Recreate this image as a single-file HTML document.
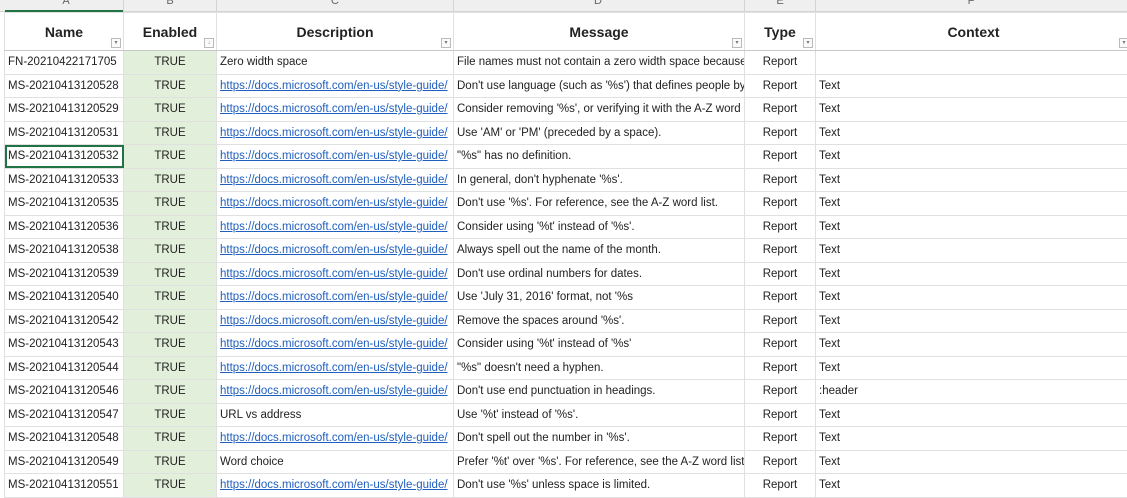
<!DOCTYPE html><html><head><style>
body{margin:0;width:1127px;height:497px;overflow:hidden;background:#fff;font-family:"Liberation Sans",Calibri,sans-serif;position:relative}
.hdr{position:absolute;top:0;left:0;width:1127px;height:11px;background:#efefef;border-bottom:1px solid #d4d4d4}
.hdr span{position:absolute;top:-5px;font-size:11px;color:#666;transform:translateX(-50%)}
.vl{position:absolute;top:0;width:1px;height:11px;background:#d4d4d4}
table{position:absolute;top:12px;left:4px;border-collapse:collapse;table-layout:fixed;width:1127px}
td{border:1px solid #e0e0e0;height:22.5px;padding:0 3px;font-size:11.5px;white-space:nowrap;overflow:hidden;color:#222}
tr.h td{height:37px;font-weight:bold;font-size:14px;text-align:center;position:relative;border-bottom:1px solid #c8c8c8}
.b{background:#e2efda;text-align:center}
.c{text-align:center}
a{color:#1f5fbf;text-decoration:underline}
.dd{position:absolute;right:2px;bottom:2px;width:8px;height:8px;border:1px solid #bbb;background:#fafafa;font-size:6px;line-height:8px;color:#777;font-weight:normal}
</style></head><body>
<div class="hdr">
<span style="left:66px">A</span><span style="left:170px">B</span><span style="left:335px">C</span><span style="left:598px">D</span><span style="left:780px">E</span><span style="left:971px">F</span>
<div class="vl" style="left:123px"></div><div class="vl" style="left:216px"></div><div class="vl" style="left:453px"></div><div class="vl" style="left:744px"></div><div class="vl" style="left:815px"></div>
<div style="position:absolute;left:5px;top:10px;width:118px;height:2px;background:#217346"></div>
</div>
<table>
<colgroup><col style="width:119px"><col style="width:93px"><col style="width:237px"><col style="width:291px"><col style="width:71px"><col style="width:316px"></colgroup>
<tr class="h"><td>Name<span class="dd">▾</span></td><td>Enabled<span class="dd">↓</span></td><td>Description<span class="dd">▾</span></td><td>Message<span class="dd">▾</span></td><td>Type<span class="dd">▾</span></td><td>Context<span class="dd">▾</span></td></tr>
<tr><td>FN-20210422171705</td><td class="b">TRUE</td><td>Zero width space</td><td>File names must not contain a zero width space because it</td><td class="c">Report</td><td></td></tr>
<tr><td>MS-20210413120528</td><td class="b">TRUE</td><td><a>https://docs.microsoft.com/en-us/style-guide/</a></td><td>Don't use language (such as '%s') that defines people by t</td><td class="c">Report</td><td>Text</td></tr>
<tr><td>MS-20210413120529</td><td class="b">TRUE</td><td><a>https://docs.microsoft.com/en-us/style-guide/</a></td><td>Consider removing '%s', or verifying it with the A-Z word</td><td class="c">Report</td><td>Text</td></tr>
<tr><td>MS-20210413120531</td><td class="b">TRUE</td><td><a>https://docs.microsoft.com/en-us/style-guide/</a></td><td>Use 'AM' or 'PM' (preceded by a space).</td><td class="c">Report</td><td>Text</td></tr>
<tr><td style="outline:2px solid #217346;outline-offset:-2px">MS-20210413120532</td><td class="b">TRUE</td><td><a>https://docs.microsoft.com/en-us/style-guide/</a></td><td>"%s" has no definition.</td><td class="c">Report</td><td>Text</td></tr>
<tr><td>MS-20210413120533</td><td class="b">TRUE</td><td><a>https://docs.microsoft.com/en-us/style-guide/</a></td><td>In general, don't hyphenate '%s'.</td><td class="c">Report</td><td>Text</td></tr>
<tr><td>MS-20210413120535</td><td class="b">TRUE</td><td><a>https://docs.microsoft.com/en-us/style-guide/</a></td><td>Don't use '%s'. For reference, see the A-Z word list.</td><td class="c">Report</td><td>Text</td></tr>
<tr><td>MS-20210413120536</td><td class="b">TRUE</td><td><a>https://docs.microsoft.com/en-us/style-guide/</a></td><td>Consider using '%t' instead of '%s'.</td><td class="c">Report</td><td>Text</td></tr>
<tr><td>MS-20210413120538</td><td class="b">TRUE</td><td><a>https://docs.microsoft.com/en-us/style-guide/</a></td><td>Always spell out the name of the month.</td><td class="c">Report</td><td>Text</td></tr>
<tr><td>MS-20210413120539</td><td class="b">TRUE</td><td><a>https://docs.microsoft.com/en-us/style-guide/</a></td><td>Don't use ordinal numbers for dates.</td><td class="c">Report</td><td>Text</td></tr>
<tr><td>MS-20210413120540</td><td class="b">TRUE</td><td><a>https://docs.microsoft.com/en-us/style-guide/</a></td><td>Use 'July 31, 2016' format, not '%s</td><td class="c">Report</td><td>Text</td></tr>
<tr><td>MS-20210413120542</td><td class="b">TRUE</td><td><a>https://docs.microsoft.com/en-us/style-guide/</a></td><td>Remove the spaces around '%s'.</td><td class="c">Report</td><td>Text</td></tr>
<tr><td>MS-20210413120543</td><td class="b">TRUE</td><td><a>https://docs.microsoft.com/en-us/style-guide/</a></td><td>Consider using '%t' instead of '%s'</td><td class="c">Report</td><td>Text</td></tr>
<tr><td>MS-20210413120544</td><td class="b">TRUE</td><td><a>https://docs.microsoft.com/en-us/style-guide/</a></td><td>"%s" doesn't need a hyphen.</td><td class="c">Report</td><td>Text</td></tr>
<tr><td>MS-20210413120546</td><td class="b">TRUE</td><td><a>https://docs.microsoft.com/en-us/style-guide/</a></td><td>Don't use end punctuation in headings.</td><td class="c">Report</td><td>:header</td></tr>
<tr><td>MS-20210413120547</td><td class="b">TRUE</td><td>URL vs address</td><td>Use '%t' instead of '%s'.</td><td class="c">Report</td><td>Text</td></tr>
<tr><td>MS-20210413120548</td><td class="b">TRUE</td><td><a>https://docs.microsoft.com/en-us/style-guide/</a></td><td>Don't spell out the number in '%s'.</td><td class="c">Report</td><td>Text</td></tr>
<tr><td>MS-20210413120549</td><td class="b">TRUE</td><td>Word choice</td><td>Prefer '%t' over '%s'. For reference, see the A-Z word list.</td><td class="c">Report</td><td>Text</td></tr>
<tr><td>MS-20210413120551</td><td class="b">TRUE</td><td><a>https://docs.microsoft.com/en-us/style-guide/</a></td><td>Don't use '%s' unless space is limited.</td><td class="c">Report</td><td>Text</td></tr>
</table>
</body></html>
